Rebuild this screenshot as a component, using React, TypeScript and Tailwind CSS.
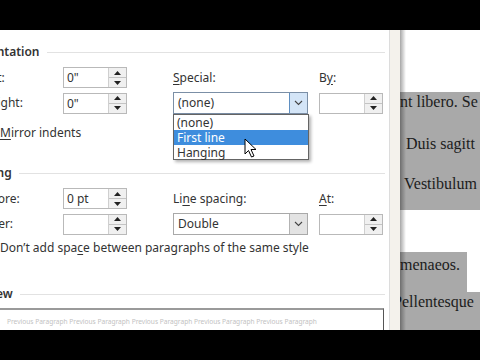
import React from "react";

function Tri({ up }: { up?: boolean }) {
  return (
    <svg width="7" height="4" viewBox="0 0 7 4">
      {up ? <polygon points="0,4 7,4 3.5,0" fill="#222" /> : <polygon points="0,0 7,0 3.5,4" fill="#222" />}
    </svg>
  );
}

function Spin({ value }: { value: string }) {
  return (
    <div className="flex h-[21px] w-[64px] border border-[#b9b9b9] bg-white">
      <div className="flex-1 pl-[3px] text-[12px] leading-[19px] text-[#333]">{value}</div>
      <div className="flex w-[18px] flex-col border-l border-[#cfcfcf] bg-[#f0f0f0]">
        <div className="flex flex-1 items-center justify-center border-b border-[#c4c4c4]">
          <Tri up />
        </div>
        <div className="flex flex-1 items-center justify-center">
          <Tri />
        </div>
      </div>
    </div>
  );
}

function Chevron() {
  return (
    <svg width="9" height="6" viewBox="0 0 9 6">
      <polyline points="1,1 4.5,4.5 8,1" fill="none" stroke="#444" strokeWidth="1.1" />
    </svg>
  );
}

function Select({ value, active }: { value: string; active?: boolean }) {
  return (
    <div
      className={
        "flex h-[22px] w-[135px] border bg-white " + (active ? "border-[#7b8fa6]" : "border-[#a9a9a9]")
      }
    >
      <div className="flex-1 pl-[4px] text-[12px] leading-[20px] text-[#333]">{value}</div>
      <div
        className={
          "flex w-[18px] items-center justify-center border-l " +
          (active ? "border-[#5f8fc1] bg-[#d4e5f7]" : "border-[#b3b3b3] bg-[#e3e3e3]")
        }
      >
        <Chevron />
      </div>
    </div>
  );
}

function Label({ text, shift }: { text: React.ReactNode; shift: string }) {
  return (
    <div className="w-[63px] overflow-hidden">
      <div className={"whitespace-nowrap text-[12px] leading-[16px] text-[#333] " + shift}>{text}</div>
    </div>
  );
}

function Header({ text, shift }: { text: string; shift: string }) {
  return (
    <div className="flex h-[16px] items-center overflow-hidden pr-[4px]">
      <span className={"whitespace-nowrap text-[12px] font-semibold leading-[16px] text-[#333] " + shift}>
        {text}
      </span>
      <div className="ml-[7px] h-px flex-1 bg-[#e2e2e2]" />
    </div>
  );
}

function Cursor() {
  return (
    <svg className="absolute left-[244px] top-[108px]" width="14" height="21" viewBox="0 0 14 21">
      <polygon
        points="1,1 1,16 4.5,12.5 7.5,19 10,18 7,11.5 12,11.5"
        fill="#fff"
        stroke="#000"
        strokeWidth="1"
        strokeLinejoin="round"
      />
    </svg>
  );
}

export default function App() {
  const sans = "font-['Noto_Sans',sans-serif]";
  return (
    <div className={"flex h-[360px] w-[480px] flex-col overflow-hidden bg-black " + sans}>
      <div className="h-[30px] shrink-0 bg-black" />
      <div className="flex h-[300px] shrink-0">
        {/* dialog */}
        <div className="relative w-[389px] shrink-0 overflow-hidden bg-white pt-[14px]">
          <Header text="Indentation" shift="ml-[-30px]" />
          <div className="mt-[7px] flex items-center">
            <Label text="Left:" shift="ml-[-20px]" />
            <Spin value={'0"'} />
            <div className="w-[46px]" />
            <div className="w-[134px] text-[12px] leading-[16px] text-[#333]">
              <u className="underline-offset-2">S</u>pecial:
            </div>
            <div className="w-[12px]" />
            <div className="text-[12px] leading-[16px] text-[#333]">
              B<u className="underline-offset-2">y</u>:
            </div>
          </div>
          <div className="mt-[4px] flex items-center">
            <Label text="Right:" shift="ml-[-10px]" />
            <Spin value={'0"'} />
            <div className="w-[46px]" />
            <Select value="(none)" active />
            <div className="w-[11px]" />
            <Spin value="" />
          </div>
          <div className="mt-[11px] h-[16px] whitespace-nowrap text-[12px] leading-[16px] text-[#333]">
            <u className="underline-offset-2">M</u>irror indents
          </div>
          <div className="mt-[24px]">
            <Header text="Spacing" shift="ml-[-34px]" />
          </div>
          <div className="mt-[7px] flex items-center">
            <Label text="Before:" shift="ml-[-21px]" />
            <Spin value="0 pt" />
            <div className="w-[46px]" />
            <div className="w-[134px] text-[12px] leading-[16px] text-[#333]">
              Li<u className="underline-offset-2">n</u>e spacing:
            </div>
            <div className="w-[12px]" />
            <div className="text-[12px] leading-[16px] text-[#333]">
              <u className="underline-offset-2">A</u>t:
            </div>
          </div>
          <div className="mt-[4px] flex items-center">
            <Label text="After:" shift="ml-[-18px]" />
            <Spin value="" />
            <div className="w-[46px]" />
            <Select value="Double" />
            <div className="w-[11px]" />
            <Spin value="" />
          </div>
          <div className="mt-[5px] h-[16px] whitespace-nowrap text-[12px] leading-[16px] text-[#333]">
            Don’t add spa<u className="underline-offset-2">c</u>e between paragraphs of the same style
          </div>
          <div className="mt-[30px]">
            <Header text="Preview" shift="ml-[-33px]" />
          </div>
          <div className="mt-[6px] h-[40px] w-[384px] border-r border-t-2 border-[#9a9a9a] border-r-[#555] pl-[7px] pt-[8px]">
            <div className="whitespace-nowrap text-[6.6px] leading-[8px] text-[#c2c2c2]">
              Previous Paragraph Previous Paragraph Previous Paragraph Previous Paragraph Previous Paragraph
            </div>
          </div>

          {/* dropdown list */}
          <div className="absolute left-[173px] top-[84px] w-[136px] border border-[#646464] bg-white text-[12px] leading-[15px] text-[#333] shadow-[2px_2px_3px_rgba(0,0,0,0.3)]">
            <div className="h-[15px] pl-[3px]">(none)</div>
            <div className="h-[15px] bg-[#3e8ddd] pl-[3px] text-white">First line</div>
            <div className="h-[14px] pl-[3px]">Hanging</div>
          </div>
          <Cursor />
        </div>
        {/* strip */}
        <div className="w-[11px] shrink-0 border-l border-[#dcdcdc] bg-[#f4f2ec]" />
        {/* document */}
        <div className="relative flex flex-1 flex-col overflow-hidden bg-white font-['Liberation_Serif',serif] text-[16px] text-[#1c1c1c]">
          <div className="h-[62px] shrink-0" />
          <div className="h-[118px] shrink-0 bg-[#a9a9a9]">
            <div className="mt-[1px] whitespace-nowrap leading-[18px]">nt libero. Se</div>
            <div className="mt-[24px] whitespace-nowrap pl-[6px] leading-[18px]">Duis sagitt</div>
            <div className="mt-[22px] whitespace-nowrap pl-[4px] leading-[18px]">Vestibulum</div>
          </div>
          <div className="h-[42px] shrink-0" />
          <div className="h-[40px] w-[67px] shrink-0 bg-[#a9a9a9]">
            <div className="mt-[4px] whitespace-nowrap leading-[18px]">menaeos.</div>
          </div>
          <div className="flex-1 bg-[#a9a9a9]">
            <div className="ml-[-7px] mt-[1px] whitespace-nowrap leading-[18px]">Pellentesque</div>
          </div>
          <div className="absolute bottom-0 left-0 top-0 w-[6px] bg-gradient-to-r from-[rgba(0,0,0,0.35)] to-transparent" />
        </div>
      </div>
      <div className="flex-1 bg-black" />
    </div>
  );
}
